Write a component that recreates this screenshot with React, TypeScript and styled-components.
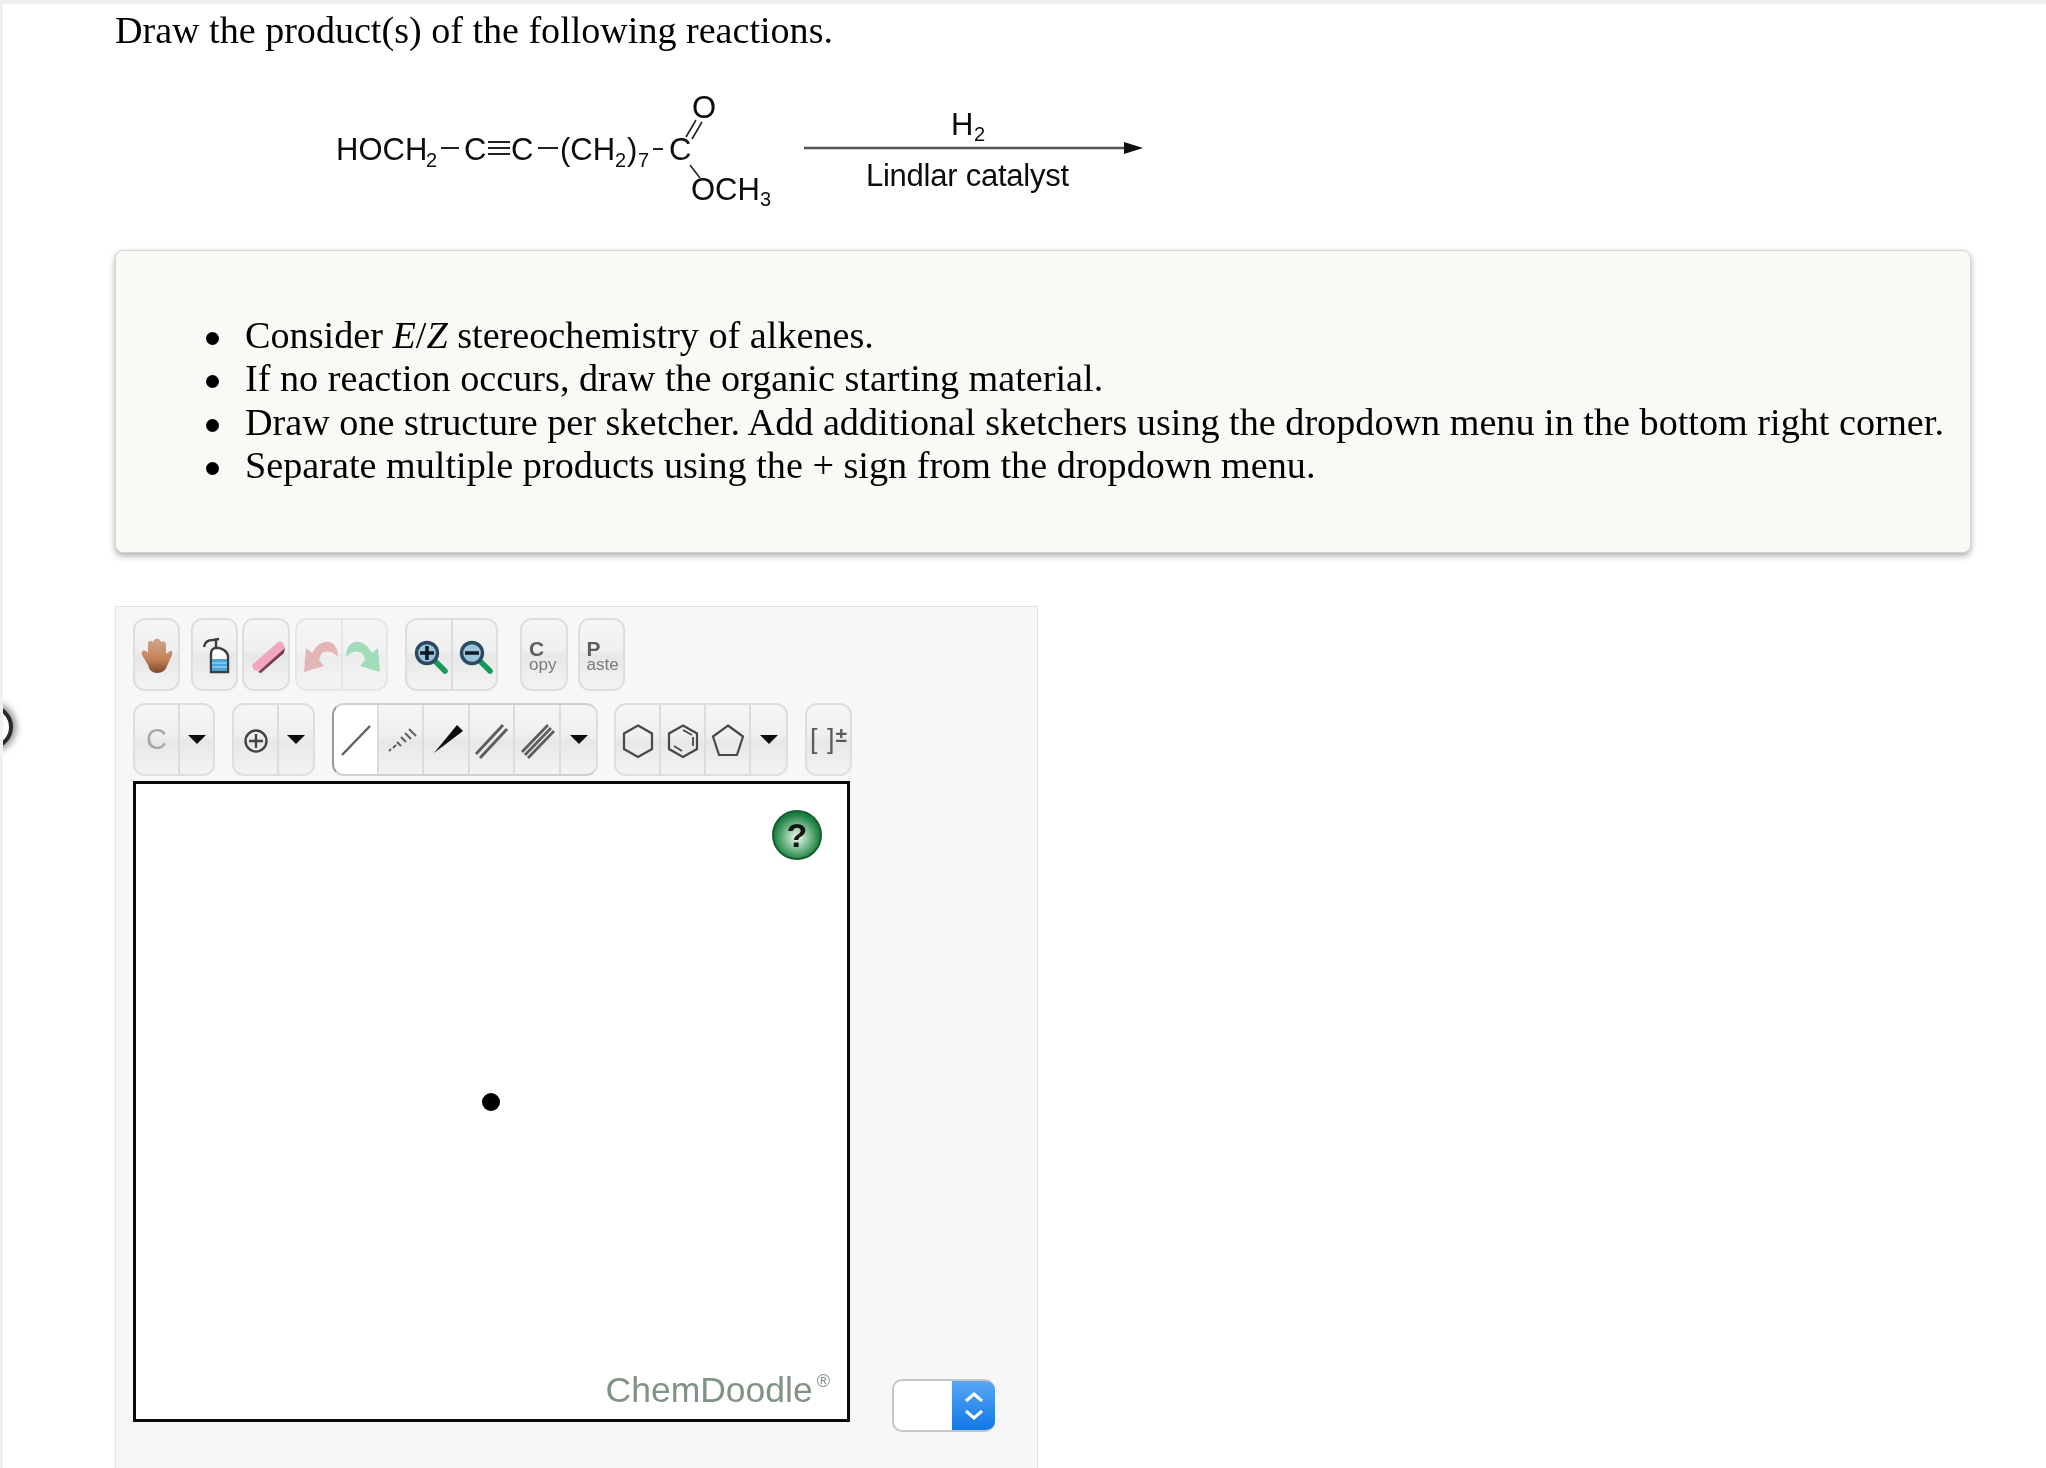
import React from "react";
import styled, { createGlobalStyle } from "styled-components";

const Global = createGlobalStyle`
  html, body { margin: 0; padding: 0; background: #fff; }
  body { font-family: "Liberation Serif", "Times New Roman", serif; color: #000; }
`;

const Page = styled.div`
  position: relative;
  box-sizing: border-box;
  width: 2046px;
  height: 1468px;
  overflow: hidden;
  padding: 5px 0 0 112px;
  background: #fff;
  border-top: 4px solid #efefef;
  border-left: 3px solid #f1f1f1;
  filter: blur(0.6px);
`;

const Heading = styled.h1`
  margin: 0;
  font-size: 38.1px;
  line-height: 43px;
  font-weight: 400;
`;

const ReactionSvg = styled.svg`
  display: block;
  margin: 28px 0 0 185px;
  width: 880px;
  height: 140px;
  font-family: "Liberation Sans", Arial, sans-serif;
  font-size: 31px;
  fill: #0c0c0c;
`;

const Notes = styled.div`
  box-sizing: border-box;
  width: 1856px;
  height: 303px;
  margin-top: 30px;
  padding: 63px 0 0 0;
  background: #f9f9f5;
  border: 1px solid #d4d4d0;
  border-radius: 8px;
  box-shadow: 0 3px 6px rgba(0, 0, 0, 0.32);
`;

const NoteList = styled.ul`
  margin: 0;
  padding: 0 0 0 129px;
  list-style: none;
  font-size: 38.2px;
  line-height: 43.3px;
  white-space: nowrap;
`;

const Note = styled.li`
  position: relative;
  &::before {
    content: "";
    position: absolute;
    left: -39px;
    top: 18px;
    width: 13px;
    height: 13px;
    border-radius: 50%;
    background: #000;
  }
`;

const Sketcher = styled.section`
  box-sizing: border-box;
  width: 923px;
  height: 900px;
  margin-top: 53px;
  padding: 11px 0 0 17px;
  background: #f7f7f7;
  border: 1px solid #e4e4e4;
`;

const ToolRow = styled.div<{ $top?: number }>`
  display: flex;
  height: 73px;
  margin-top: ${(p) => p.$top ?? 0}px;
`;

const Group = styled.div<{ $gap?: number; $faded?: boolean }>`
  display: flex;
  margin-left: ${(p) => p.$gap ?? 0}px;
  border: 2px solid #dedede;
  border-radius: 12px;
  overflow: hidden;
  background: linear-gradient(#f6f6f6 0%, #efefef 45%, #e7e7e7 52%, #f3f3f3 100%);
  opacity: ${(p) => (p.$faded ? 0.62 : 1)};
`;

const Cell = styled.div<{ $w?: number; $active?: boolean }>`
  position: relative;
  flex: none;
  display: flex;
  align-items: center;
  justify-content: center;
  width: ${(p) => p.$w ?? 43}px;
  background: ${(p) => (p.$active ? "#fff" : "transparent")};
  & + & {
    border-left: 2px solid #dcdcdc;
  }
`;

const ActiveGroup = styled(Group)`
  border-left-color: #9a9a9a;
  border-top-color: #d0d0d0;
  border-bottom-color: #d0d0d0;
`;

const Icon = styled.svg`
  width: 43px;
  height: 69px;
  flex: none;
`;

const Caret = styled.span`
  width: 0;
  height: 0;
  border-left: 9px solid transparent;
  border-right: 9px solid transparent;
  border-top: 9px solid #0c0c0c;
`;

const AtomLetter = styled.span`
  font-family: "Liberation Sans", Arial, sans-serif;
  font-size: 29px;
  color: #a8a8a8;
`;

const ClipLabel = styled.span`
  display: flex;
  flex-direction: column;
  align-items: flex-start;
  width: 30px;
  font-family: "Liberation Sans", Arial, sans-serif;
  color: #7b7b7b;
  line-height: 13px;
  font-size: 17px;
  b {
    font-size: 21px;
    line-height: 19px;
    color: #5e5e5e;
  }
`;

const BracketLabel = styled.span`
  font-family: "Liberation Sans", Arial, sans-serif;
  font-size: 27px;
  color: #5a5a5a;
  letter-spacing: 1px;
  sup {
    font-size: 21px;
    font-weight: 700;
    line-height: 0;
    vertical-align: 6px;
    letter-spacing: 0;
  }
`;

const CanvasRow = styled.div`
  display: flex;
  align-items: flex-start;
  margin-top: 5px;
`;

const Canvas = styled.div`
  position: relative;
  box-sizing: border-box;
  width: 717px;
  height: 641px;
  background: #fff;
  border: 3px solid #0a0a0a;
`;

const Help = styled.div`
  position: absolute;
  top: 26px;
  right: 25px;
  box-sizing: border-box;
  width: 50px;
  height: 50px;
  display: flex;
  align-items: center;
  justify-content: center;
  border-radius: 50%;
  border: 2px solid #14602f;
  background: radial-gradient(circle at 50% 55%, #f4f7f4 0%, #8ec79f 30%, #1f8244 66%, #0f6a32 100%);
  font-family: "Liberation Sans", Arial, sans-serif;
  font-weight: 700;
  font-size: 34px;
  color: #141414;
`;

const Dot = styled.span`
  position: absolute;
  left: 346px;
  top: 309px;
  width: 18px;
  height: 18px;
  border-radius: 50%;
  background: #000;
`;

const Watermark = styled.div`
  position: absolute;
  right: 17px;
  bottom: 9px;
  font-family: "Liberation Sans", Arial, sans-serif;
  font-size: 35.5px;
  line-height: 40px;
  color: #7f9485;
  sup {
    font-size: 18px;
    line-height: 0;
    vertical-align: 15px;
    margin-left: 4px;
  }
`;

const Select = styled.div`
  box-sizing: border-box;
  display: flex;
  width: 103px;
  height: 53px;
  margin: 598px 0 0 42px;
  border-radius: 10px;
  overflow: hidden;
  background: #fff;
  border: 2px solid #c6c6c6;
  border-right: none;
`;

const SelectField = styled.div`
  flex: 1;
`;

const SelectStepper = styled.div`
  width: 43px;
  display: flex;
  align-items: center;
  justify-content: center;
  margin: -2px 0;
  background: linear-gradient(#5aa9f6, #0f76e6);
`;

const Spinner = styled.div`
  position: absolute;
  left: -34px;
  top: 701px;
  box-sizing: border-box;
  width: 44px;
  height: 44px;
  border-radius: 50%;
  background: #fff;
  border: 4px solid #2a2a2a;
  box-shadow: 0 0 7px 3px rgba(0, 0, 0, 0.45);
`;

const Ic = ({ children }: { children: React.ReactNode }) => (
  <Icon viewBox="1 0 43 69">{children}</Icon>
);

const Hand = () => (
  <Ic>
    <defs>
      <linearGradient id="handFill" x1="0" y1="0" x2="0" y2="1">
        <stop offset="0" stopColor="#cfa58e" />
        <stop offset="0.6" stopColor="#c58259" />
        <stop offset="1" stopColor="#7b4a2a" />
      </linearGradient>
    </defs>
    <path
      d="M14 45 L8 35 Q7 29 12 31 L14 33 L14 23 Q16 19 19 22 L20 20 Q23 17 26 20 L27 22 Q31 20 32 24 L32 34 L36 31 Q39 30 38 35 L33 46 Q31 53 23 53 Q16 53 14 45 Z"
      fill="url(#handFill)"
    />
  </Ic>
);

const Bottle = () => (
  <Ic>
    <path d="M12 27 Q13 20 21 20 L27 19 M24 20 L24 28" fill="none" stroke="#3d3d3d" strokeWidth="2.4" />
    <path d="M19 34 Q19 29 23 28 L27 28 Q35 30 36 36 L36 52 L19 52 Z" fill="#fff" stroke="#3d3d3d" strokeWidth="2.4" />
    <path d="M20 39 H35 V51 H20 Z" fill="#4ba3d6" />
    <path d="M20 43 H35 M20 47 H35" stroke="#b7e0f4" strokeWidth="1" />
  </Ic>
);

const Eraser = () => (
  <Ic>
    <path d="M8 45 L33 23 Q36 20 39 23 L41 28 L17 49 Q13 52 10 50 Z" fill="#f4a6c0" />
    <path d="M14 52 L41 28 L40 33 L17 53 Z" fill="#7a3a50" />
  </Ic>
);

const UndoArrow = ({ fill, flip }: { fill: string; flip?: boolean }) => (
  <Ic>
    <g transform={flip ? "translate(45 0) scale(-1 1)" : undefined}>
      <path d="M7 52 L9 28 L15 33 Q24 18 35 23 Q41 27 41 37 Q34 30 27 32 Q23 34 22 40 L27 46 Z" fill={fill} />
    </g>
  </Ic>
);

const Magnifier = ({ plus }: { plus?: boolean }) => (
  <Ic>
    <path d="M29 42 L38 51" stroke="#169a58" strokeWidth="5.5" strokeLinecap="round" />
    <circle cx="20" cy="33" r="10.5" fill="#9cc3d8" stroke="#2b4a62" strokeWidth="3.4" />
    <path d="M13 33 H27" stroke="#0d1a28" strokeWidth="3.6" />
    {plus && <path d="M20 26 V40" stroke="#0d1a28" strokeWidth="3.6" />}
  </Ic>
);

const AtomIcon = () => (
  <Ic>
    <circle cx="23" cy="36" r="10.5" fill="none" stroke="#444" strokeWidth="2.4" />
    <path d="M16 36 H30 M23 29 V43" stroke="#444" strokeWidth="2.4" />
  </Ic>
);

const Stroke = styled.g`
  fill: none;
  stroke: #5e5e5e;
  stroke-width: 2;
`;

const RingStroke = styled.g`
  fill: none;
  stroke: #484848;
  stroke-width: 2.2;
`;

const SingleBond = () => (
  <Ic>
    <Stroke>
      <path d="M9 50 L37 21" strokeWidth="2.4" />
    </Stroke>
  </Ic>
);

const DashedBond = () => (
  <Ic>
    <Stroke>
      <path d="M11 46 L13 44 M15 43 L18 40 M19 37 L23 41 M23 32 L28 37 M27 28 L33 34 M31 24 L38 31" strokeWidth="2" />
    </Stroke>
  </Ic>
);

const WedgeBond = () => (
  <Ic>
    <path d="M10 48 L33 20 L39 26 Z" fill="#0d0d0d" />
  </Ic>
);

const DoubleBond = () => (
  <Ic>
    <Stroke>
      <path d="M7 49 L34 20 M11 53 L38 24" strokeWidth="3" />
    </Stroke>
  </Ic>
);

const TripleBond = () => (
  <Ic>
    <Stroke>
      <path d="M7 47 L33 20 M10 50 L36 23 M13 53 L39 26" strokeWidth="2.8" />
    </Stroke>
  </Ic>
);

const Hexagon = ({ inner }: { inner?: boolean }) => (
  <Ic>
    <RingStroke>
      <path d="M23 20.5 L37 28.5 L37 44 L23 52 L9 44 L9 28.5 Z" />
      {inner && <path d="M23 25 L32 30 M33 32 V41 M14 41 L22 46" strokeWidth="1.8" />}
    </RingStroke>
  </Ic>
);

const Pentagon = () => (
  <Ic>
    <RingStroke>
      <path d="M23 20.5 L38 31.5 L32 50 L14 50 L8 31.5 Z" />
    </RingStroke>
  </Ic>
);

const Chevrons = () => (
  <svg width="24" height="34" viewBox="0 0 24 34">
    <path d="M4 12 L12 5 L20 12 M4 22 L12 29 L20 22" fill="none" stroke="#fff" strokeWidth="3" />
  </svg>
);

const Reaction = () => (
  <ReactionSvg viewBox="300 80 880 140">
    <text x="336" y="160">HOCH</text>
    <text x="426" y="167" fontSize="20">2</text>
    <path d="M441 148 H459" stroke="#222" strokeWidth="2" />
    <text x="464" y="160">C</text>
    <path d="M488 142 H510 M488 148 H510 M488 154 H510" stroke="#222" strokeWidth="1.8" />
    <text x="511" y="160">C</text>
    <path d="M538 148 H558" stroke="#222" strokeWidth="2" />
    <text x="560" y="160">(CH</text>
    <text x="615" y="167" fontSize="20">2</text>
    <text x="627" y="160">)</text>
    <text x="638" y="167" fontSize="20">7</text>
    <path d="M653 149 H663" stroke="#222" strokeWidth="2" />
    <text x="669" y="160">C</text>
    <text x="692" y="118">O</text>
    <path d="M686 137 L696 120 M692 139 L702 122" stroke="#222" strokeWidth="1.6" />
    <path d="M690 165 L700 178" stroke="#222" strokeWidth="1.6" />
    <text x="691" y="200">OCH</text>
    <text x="760" y="206" fontSize="20">3</text>
    <text x="951" y="135">H</text>
    <text x="974" y="141" fontSize="20">2</text>
    <path d="M804 148 H1126" stroke="#555" strokeWidth="2.6" />
    <path d="M1124 142 L1143 148 L1124 154 Z" fill="#111" />
    <text x="866" y="186" textLength="203">Lindlar catalyst</text>
  </ReactionSvg>
);

export default function App() {
  return (
    <Page>
      <Global />
      <Spinner />
      <Heading>Draw the product(s) of the following reactions.</Heading>
      <Reaction />
      <Notes>
        <NoteList>
          <Note>
            Consider <i>E</i>/<i>Z</i> stereochemistry of alkenes.
          </Note>
          <Note>If no reaction occurs, draw the organic starting material.</Note>
          <Note>Draw one structure per sketcher. Add additional sketchers using the dropdown menu in the bottom right corner.</Note>
          <Note>Separate multiple products using the + sign from the dropdown menu.</Note>
        </NoteList>
      </Notes>
      <Sketcher>
        <ToolRow>
          <Group><Cell><Hand /></Cell></Group>
          <Group $gap={11}><Cell><Bottle /></Cell></Group>
          <Group $gap={4}><Cell $w={44}><Eraser /></Cell></Group>
          <Group $gap={5} $faded>
            <Cell $w={44}><UndoArrow fill="#d98f8a" /></Cell>
            <Cell><UndoArrow fill="#6fcb95" flip /></Cell>
          </Group>
          <Group $gap={17}>
            <Cell $w={44}><Magnifier plus /></Cell>
            <Cell><Magnifier /></Cell>
          </Group>
          <Group $gap={22}>
            <Cell $w={44}><ClipLabel><b>C</b>opy</ClipLabel></Cell>
          </Group>
          <Group $gap={10}>
            <Cell><ClipLabel><b>P</b>aste</ClipLabel></Cell>
          </Group>
        </ToolRow>
        <ToolRow $top={12}>
          <Group>
            <Cell><AtomLetter>C</AtomLetter></Cell>
            <Cell $w={33}><Caret /></Cell>
          </Group>
          <Group $gap={17}>
            <Cell><AtomIcon /></Cell>
            <Cell $w={34}><Caret /></Cell>
          </Group>
          <ActiveGroup $gap={17}>
            <Cell $active><SingleBond /></Cell>
            <Cell><DashedBond /></Cell>
            <Cell $w={44}><WedgeBond /></Cell>
            <Cell><DoubleBond /></Cell>
            <Cell $w={44}><TripleBond /></Cell>
            <Cell $w={35}><Caret /></Cell>
          </ActiveGroup>
          <Group $gap={16}>
            <Cell><Hexagon /></Cell>
            <Cell><Hexagon inner /></Cell>
            <Cell><Pentagon /></Cell>
            <Cell $w={35}><Caret /></Cell>
          </Group>
          <Group $gap={17}>
            <Cell><BracketLabel>[ ]<sup>±</sup></BracketLabel></Cell>
          </Group>
        </ToolRow>
        <CanvasRow>
          <Canvas>
            <Help>?</Help>
            <Dot />
            <Watermark>ChemDoodle<sup>®</sup></Watermark>
          </Canvas>
          <Select>
            <SelectField />
            <SelectStepper><Chevrons /></SelectStepper>
          </Select>
        </CanvasRow>
      </Sketcher>
    </Page>
  );
}
